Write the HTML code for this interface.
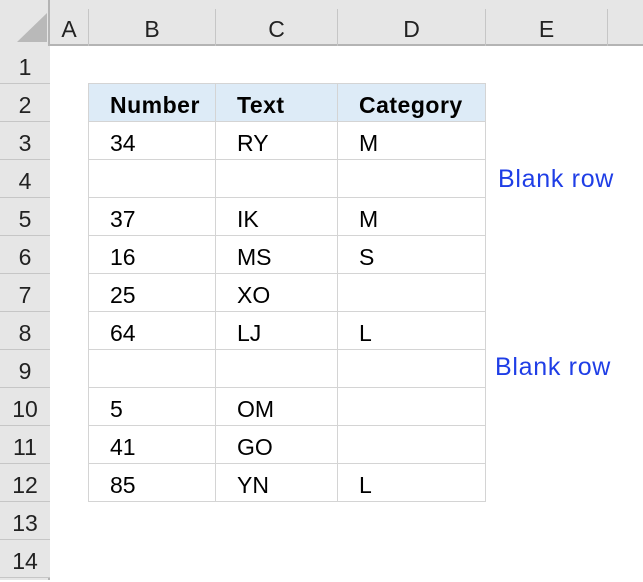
<!DOCTYPE html><html><head><style>
body{margin:0;width:643px;height:580px;background:#fff;position:relative;overflow:hidden;font-family:"Liberation Sans",Arial,sans-serif;}
div{position:absolute;box-sizing:border-box;}
.ch{top:9px;height:37px;border-right:1px solid #c6c6c6;font-size:23px;color:#222;text-align:center;line-height:41px;}
.rh{left:0;width:50px;height:38px;border-bottom:1px solid #c6c6c6;font-size:23px;color:#222;text-align:center;line-height:42px;background:#e6e6e6;}
.c{height:38px;border-right:1px solid #d4d4d4;border-bottom:1px solid #d4d4d4;font-size:23px;line-height:42px;padding-left:21px;color:#000;white-space:nowrap;}
.h{background:#ddebf7;font-weight:bold;letter-spacing:0.5px;}
.blue{color:#1f3ee6;font-size:25px;letter-spacing:0.7px;white-space:nowrap;}
</style></head><body>
<div style="left:0;top:0;width:643px;height:46px;background:#e6e6e6;border-bottom:2px solid #b4b4b4"></div>
<div style="left:0;top:0;width:50px;height:580px;background:#e6e6e6;border-right:2px solid #b4b4b4"></div>
<div style="left:17px;top:13px;width:30px;height:29px;background:#b9b9b9;clip-path:polygon(100% 0,100% 100%,0 100%)"></div>
<div class="ch" style="left:50px;width:39px">A</div>
<div class="ch" style="left:89px;width:127px">B</div>
<div class="ch" style="left:216px;width:122px">C</div>
<div class="ch" style="left:338px;width:148px">D</div>
<div class="ch" style="left:486px;width:122px">E</div>
<div class="rh" style="top:46px">1</div><div class="rh" style="top:84px">2</div><div class="rh" style="top:122px">3</div><div class="rh" style="top:160px">4</div><div class="rh" style="top:198px">5</div><div class="rh" style="top:236px">6</div><div class="rh" style="top:274px">7</div><div class="rh" style="top:312px">8</div><div class="rh" style="top:350px">9</div><div class="rh" style="top:388px">10</div><div class="rh" style="top:426px">11</div><div class="rh" style="top:464px">12</div><div class="rh" style="top:502px">13</div><div class="rh" style="top:540px">14</div>
<div style="left:88px;top:83px;width:398px;height:419px;border-left:1px solid #d4d4d4;border-top:1px solid #d4d4d4"></div>
<div class="c h" style="left:89px;top:84px;width:127px">Number</div><div class="c h" style="left:216px;top:84px;width:122px">Text</div><div class="c h" style="left:338px;top:84px;width:148px">Category</div>
<div class="c" style="left:89px;top:122px;width:127px">34</div><div class="c" style="left:216px;top:122px;width:122px">RY</div><div class="c" style="left:338px;top:122px;width:148px">M</div>
<div class="c" style="left:89px;top:160px;width:127px"></div><div class="c" style="left:216px;top:160px;width:122px"></div><div class="c" style="left:338px;top:160px;width:148px"></div>
<div class="c" style="left:89px;top:198px;width:127px">37</div><div class="c" style="left:216px;top:198px;width:122px">IK</div><div class="c" style="left:338px;top:198px;width:148px">M</div>
<div class="c" style="left:89px;top:236px;width:127px">16</div><div class="c" style="left:216px;top:236px;width:122px">MS</div><div class="c" style="left:338px;top:236px;width:148px">S</div>
<div class="c" style="left:89px;top:274px;width:127px">25</div><div class="c" style="left:216px;top:274px;width:122px">XO</div><div class="c" style="left:338px;top:274px;width:148px"></div>
<div class="c" style="left:89px;top:312px;width:127px">64</div><div class="c" style="left:216px;top:312px;width:122px">LJ</div><div class="c" style="left:338px;top:312px;width:148px">L</div>
<div class="c" style="left:89px;top:350px;width:127px"></div><div class="c" style="left:216px;top:350px;width:122px"></div><div class="c" style="left:338px;top:350px;width:148px"></div>
<div class="c" style="left:89px;top:388px;width:127px">5</div><div class="c" style="left:216px;top:388px;width:122px">OM</div><div class="c" style="left:338px;top:388px;width:148px"></div>
<div class="c" style="left:89px;top:426px;width:127px">41</div><div class="c" style="left:216px;top:426px;width:122px">GO</div><div class="c" style="left:338px;top:426px;width:148px"></div>
<div class="c" style="left:89px;top:464px;width:127px">85</div><div class="c" style="left:216px;top:464px;width:122px">YN</div><div class="c" style="left:338px;top:464px;width:148px">L</div>
<div class="blue" style="left:498px;top:165px;">Blank row</div>
<div class="blue" style="left:495px;top:353px;">Blank row</div>
</body></html>
